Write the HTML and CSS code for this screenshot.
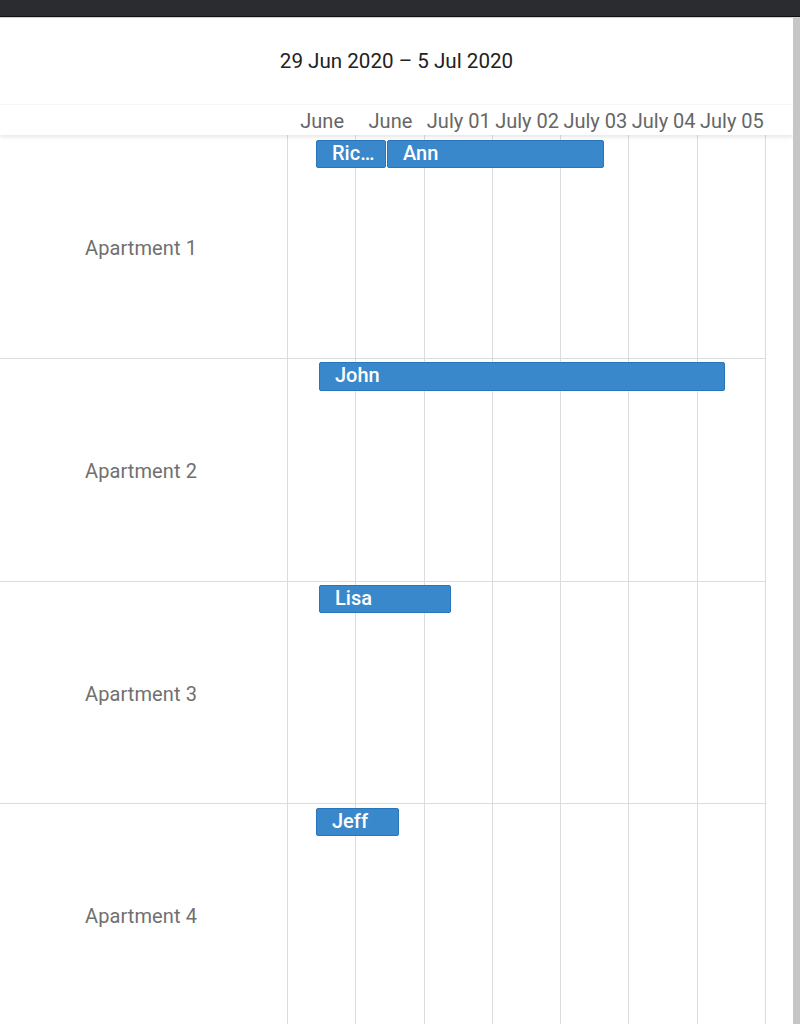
FILE: index.html
```html
<!DOCTYPE html>
<html>
<head>
<meta charset="utf-8">
<link rel="stylesheet" href="styles.css">
</head>
<body>
<div class="topbar"></div>
<div class="app">
  <div class="main">
    <div class="header">
      <div class="title">29 Jun 2020 – 5 Jul 2020</div>
      <div class="dates">
        <div class="date">June</div>
        <div class="date">June</div>
        <div class="date">July 01</div>
        <div class="date">July 02</div>
        <div class="date">July 03</div>
        <div class="date">July 04</div>
        <div class="date">July 05</div>
      </div>
    </div>
    <div class="rows">
      <div class="row">
        <div class="resource">Apartment 1</div>
        <div class="timeline">
          <div class="col"></div><div class="col"></div><div class="col"></div><div class="col"></div><div class="col"></div><div class="col"></div><div class="col"></div>
          <div class="event" style="left:28px;width:70px;top:5px">Ric…</div>
          <div class="event" style="left:99px;width:217px;top:5px">Ann</div>
        </div>
      </div>
      <div class="row">
        <div class="resource">Apartment 2</div>
        <div class="timeline">
          <div class="col"></div><div class="col"></div><div class="col"></div><div class="col"></div><div class="col"></div><div class="col"></div><div class="col"></div>
          <div class="event" style="left:31px;width:406px;top:3px;height:29px">John</div>
        </div>
      </div>
      <div class="row">
        <div class="resource">Apartment 3</div>
        <div class="timeline">
          <div class="col"></div><div class="col"></div><div class="col"></div><div class="col"></div><div class="col"></div><div class="col"></div><div class="col"></div>
          <div class="event" style="left:31px;width:132px;top:3px">Lisa</div>
        </div>
      </div>
      <div class="row">
        <div class="resource">Apartment 4</div>
        <div class="timeline">
          <div class="col"></div><div class="col"></div><div class="col"></div><div class="col"></div><div class="col"></div><div class="col"></div><div class="col"></div>
          <div class="event" style="left:28px;width:83px;top:4px">Jeff</div>
        </div>
      </div>
    </div>
  </div>
  <div class="scrollbar"></div>
</div>
</body>
</html>
```

FILE: styles.css
```css
html, body {
  margin: 0;
  padding: 0;
  height: 100%;
  overflow: hidden;
  background: #fff;
  font-family: Roboto, "Noto Sans", sans-serif;
}
.topbar {
  height: 16px;
  background: #2b2c30;
  border-bottom: 1px solid #111;
  box-shadow: 0 1px 0 #cfcfcf;
}
.app {
  display: flex;
  height: 1007px;
  margin-top: 1px;
}
.main {
  width: 793px;
  position: relative;
  overflow: hidden;
}
.scrollbar {
  width: 7px;
  background: #c6c6c6;
}
.header {
  position: relative;
  z-index: 2;
  background: #fff;
  box-shadow: 0 2px 4px rgba(0, 0, 0, 0.10);
}
.title {
  height: 86px;
  display: flex;
  align-items: center;
  justify-content: center;
  font-size: 20.6px;
  color: #222;
  border-bottom: 1px solid #f7f7f7;
  padding-left: 0;
}
.dates {
  height: 30px;
  display: grid;
  grid-template-columns: repeat(7, 68.3px);
  padding-left: 288px;
  align-items: center;
}
.date {
  text-align: center;
  font-size: 20px;
  color: #666;
  white-space: nowrap;
  margin-top: 2px;
}
.rows {
  width: 766px;
}
.row {
  display: flex;
  height: 223px;
  border-bottom: 1px solid #dcdcdc;
  box-sizing: border-box;
}
.row:nth-child(1) {
  height: 224px;
}
.row:nth-child(3) {
  height: 222px;
}
.resource {
  width: 288px;
  flex: none;
  display: flex;
  align-items: center;
  justify-content: center;
  font-size: 20px;
  color: #707070;
  letter-spacing: 0.1px;
  border-right: 1px solid #dcdcdc;
  box-sizing: border-box;
  padding-right: 5px;
  padding-top: 2px;
}
.timeline {
  position: relative;
  flex: 1;
  display: grid;
  grid-template-columns: repeat(7, 1fr);
}
.col {
  border-right: 1px solid #dcdcdc;
}
.event {
  position: absolute;
  height: 28px;
  box-sizing: border-box;
  background: #3988cb;
  border: 1px solid #2a74ba;
  border-radius: 2px;
  color: #fff;
  font-size: 20px;
  font-weight: 500;
  line-height: 25px;
  padding-left: 15px;
  white-space: nowrap;
  overflow: hidden;
}
```
